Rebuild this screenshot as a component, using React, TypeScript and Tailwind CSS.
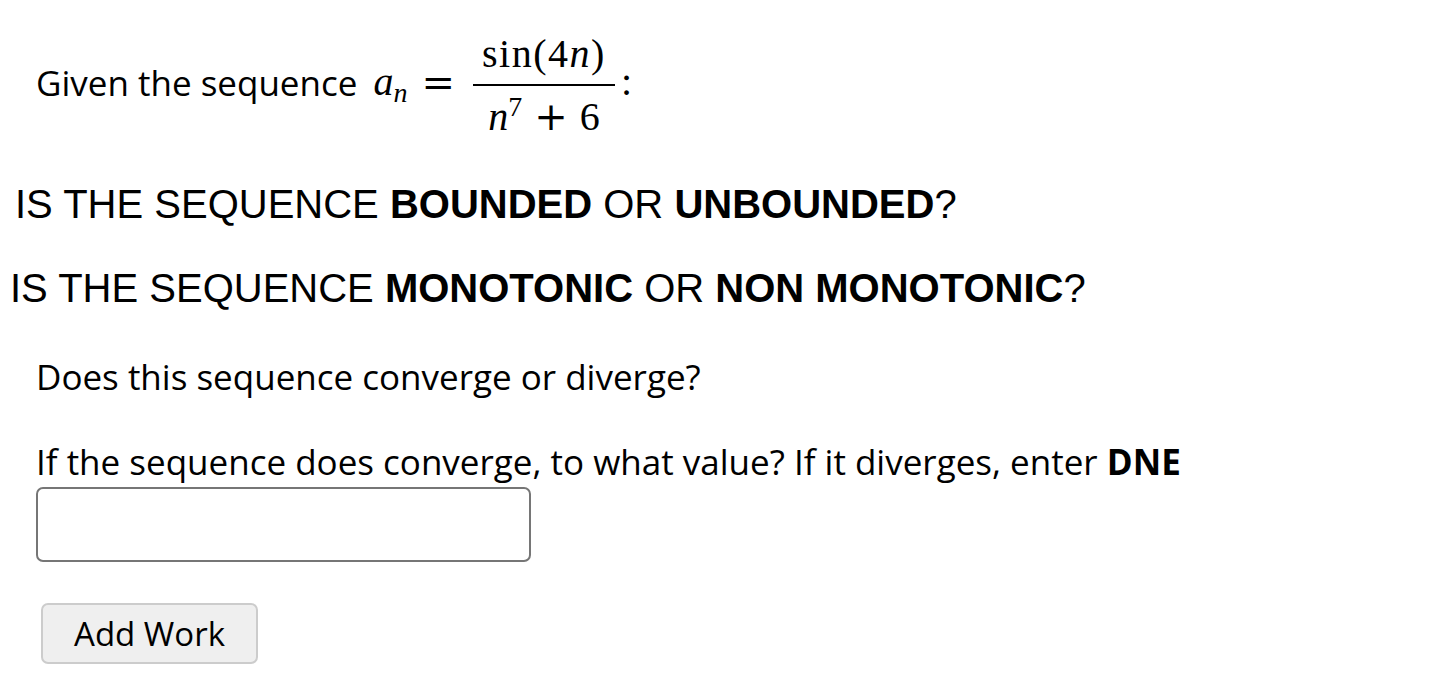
import React from "react";

export default function App() {
  return (
    <div className="w-[1449px] h-[692px] bg-white text-black overflow-hidden flex flex-col items-start">
      <div className="pl-[36px] pt-[34px] flex items-center">
        <span className="pb-[11px] text-[35px] leading-none [font-family:'Open_Sans',sans-serif]">Given the sequence</span>
        <span className="pb-[11px] ml-[16px] text-[40px] leading-none italic [font-family:'Liberation_Serif',serif]">
          a<span className="relative top-[7px] text-[28px]">n</span>
        </span>
        <span className="pb-[11px] ml-[14px] text-[40px] leading-none [font-family:'DejaVu_Serif',serif]">=</span>
        <span className="ml-[18px] flex flex-col items-center text-[40px] leading-[40px] [font-family:'Liberation_Serif',serif]">
          <span className="mb-[10px] tracking-[1.5px]">
            sin(4<i>n</i>)
          </span>
          <span className="h-[2px] w-[142px] bg-black"></span>
          <span className="mt-[10px]">
            <i>n</i>
            <span className="relative -top-[14px] text-[28px]">7</span>
            <span className="ml-[12px] [font-family:'DejaVu_Serif',serif]">+</span>
            <span className="ml-[12px]">6</span>
          </span>
        </span>
        <span className="pb-[11px] ml-[6px] text-[40px] leading-none [font-family:'Liberation_Serif',serif]">:</span>
      </div>
      <div className="pl-[15px] mt-[43px] text-[40px] leading-none [font-family:'Liberation_Sans',Arial,sans-serif]">
        IS THE SEQUENCE <b>BOUNDED</b> OR <b>UNBOUNDED</b>?
      </div>
      <div className="pl-[10px] mt-[44px] text-[40px] leading-none [font-family:'Liberation_Sans',Arial,sans-serif]">
        IS THE SEQUENCE <b>MONOTONIC</b> OR <b>NON MONOTONIC</b>?
      </div>
      <div className="pl-[36px] mt-[51px] text-[35px] leading-none [font-family:'Open_Sans',sans-serif]">
        Does this sequence converge or diverge?
      </div>
      <div className="pl-[36px] mt-[50px] text-[35px] leading-none [font-family:'Open_Sans',sans-serif]">
        If the sequence does converge, to what value? If it diverges, enter <b>DNE</b>
      </div>
      <div className="pl-[36px] mt-[8px]">
        <input className="block w-[495px] h-[75px] border-2 border-[#767676] rounded-[7px] outline-none bg-white" />
      </div>
      <div className="pl-[41px] mt-[41px]">
        <button className="w-[217px] h-[61px] bg-[#efefef] border-2 border-[#cccccc] rounded-[7px] text-[33px] leading-none [font-family:'Open_Sans',sans-serif]">
          Add Work
        </button>
      </div>
    </div>
  );
}
